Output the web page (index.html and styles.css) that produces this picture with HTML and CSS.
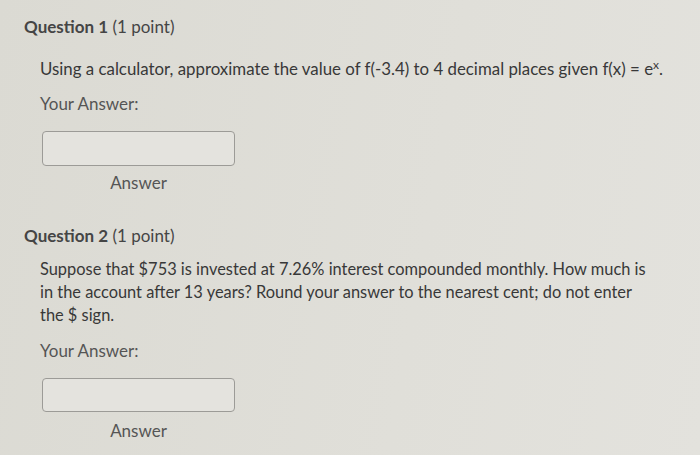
FILE: index.html
```html
<!DOCTYPE html>
<html>
<head>
<meta charset="utf-8">
<link rel="stylesheet" href="styles.css">
</head>
<body>
<div class="quiz">
  <section class="question q1">
    <h2 class="title"><b>Question 1</b> (1 point)</h2>
    <p class="text">Using a calculator, approximate the value of f(-3.4) to 4 decimal places given f(x) = e<sup>x</sup>.</p>
    <div class="your">Your Answer:</div>
    <div class="answer-block">
      <div class="input"></div>
      <div class="label">Answer</div>
    </div>
  </section>
  <section class="question q2">
    <h2 class="title"><b>Question 2</b> (1 point)</h2>
    <p class="text">Suppose that $753 is invested at 7.26% interest compounded monthly. How much is in the account after 13 years? Round your answer to the nearest cent; do not enter the $ sign.</p>
    <div class="your">Your Answer:</div>
    <div class="answer-block">
      <div class="input"></div>
      <div class="label">Answer</div>
    </div>
  </section>
</div>
</body>
</html>
```
FILE: styles.css
```css
html, body {
  margin: 0;
  padding: 0;
}
body {
  width: 700px;
  height: 455px;
  overflow: hidden;
  background: linear-gradient(100deg, #dbdad3 0%, #e0dfd9 60%, #e3e2dd 100%);
  font-family: Lato, "Noto Sans", sans-serif;
  font-size: 17px;
  line-height: 22px;
  color: #383838;
}
.quiz {
  padding: 16px 0 0 24px;
}
.question {
  display: flex;
  flex-direction: column;
  align-items: flex-start;
}
.title {
  margin: 0;
  font-size: 17px;
  font-weight: normal;
  color: #454545;
}
.title b {
  font-weight: bold;
}
.text {
  margin: 20px 0 0 16px;
  width: 640px;
  font-size: 16.85px;
}
.q2 .text {
  margin-top: 10px;
  width: 612px;
  font-size: 16.4px;
  line-height: 23px;
}
.text sup {
  font-size: 12px;
  line-height: 0;
  vertical-align: 6px;
}
.your {
  margin: 13px 0 0 16px;
  color: #555;
}
.q2 .your {
  margin-top: 14px;
}
.answer-block {
  margin: 16px 0 0 18px;
  width: 193px;
  display: flex;
  flex-direction: column;
  align-items: center;
}
.input {
  width: 191px;
  height: 33px;
  border: 1px solid #9c9b97;
  border-radius: 4px;
  background: #e4e3de;
}
.q2 .input {
  height: 32px;
}
.label {
  margin-top: 6px;
  color: #555;
}
.q2 .label {
  margin-top: 8px;
}
.q2 {
  margin-top: 31px;
}
```
